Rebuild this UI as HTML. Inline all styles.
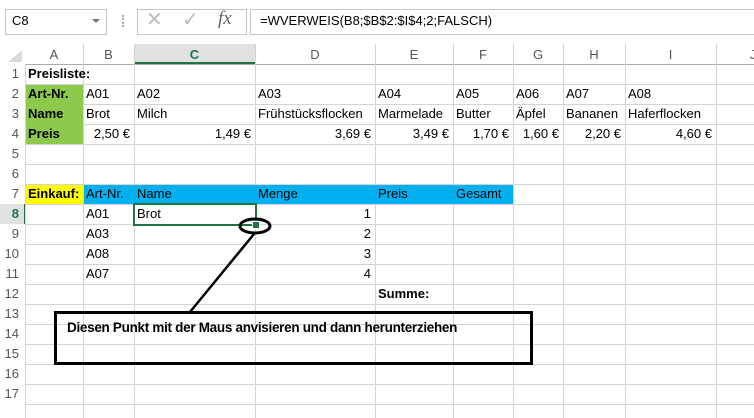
<!DOCTYPE html><html style="overflow:hidden;width:754px;height:418px"><head><style>
html,body{overflow:hidden}
body{margin:0;width:754px;height:418px;overflow:hidden;background:#fff;font-family:"Liberation Sans",sans-serif;font-size:13px;position:relative}
.a{position:absolute}
.t{position:absolute;white-space:nowrap;line-height:20px;color:#000}
.h{position:absolute;color:#555;text-align:center;line-height:19px;font-size:13px}
.vl{position:absolute;width:1px;background:#d4d4d4}
.hl{position:absolute;height:1px;background:#d4d4d4}
</style></head><body>
<div class="a" style="left:5px;top:9px;width:100px;height:24px;border:1px solid #c6c6c6"></div>
<div class="t" style="left:12px;top:11px">C8</div>
<div class="a" style="left:92px;top:19px;border-left:4px solid transparent;border-right:4px solid transparent;border-top:4px solid #777"></div>
<div class="a" style="left:122px;top:15px;width:1px;height:12px;border-left:2px dotted #aaa"></div>
<div class="a" style="left:137px;top:9px;width:108px;height:24px;border:1px solid #c6c6c6"></div>
<div class="t" style="left:146px;top:10px;color:#bbb;font-size:20px">✕</div>
<div class="t" style="left:182px;top:10px;color:#bbb;font-size:20px">✓</div>
<div class="t" style="left:218px;top:9px;color:#666;font-size:19px;font-family:'Liberation Serif',serif;font-style:italic">fx</div>
<div class="a" style="left:250px;top:9px;width:503px;height:24px;border:1px solid #c6c6c6;border-right:none"></div>
<div class="t" style="left:260px;top:11px">=WVERWEIS(B8;$B$2:$I$4;2;FALSCH)</div>
<div class="a" style="left:0;top:44px;width:754px;height:20px;background:#fff;border-bottom:1px solid #ababab"></div>
<div class="a" style="left:134px;top:44px;width:121px;height:18px;background:#e1e1e1;border-bottom:2px solid #217346"></div>
<div class="a" style="left:8px;top:50px;border-left:14px solid transparent;border-bottom:12px solid #dadada"></div>
<div class="a" style="left:0;top:64px;width:25px;height:354px;border-right:1px solid #ababab;background:#fff"></div>
<div class="a" style="left:0;top:204px;width:24px;height:20px;background:#e1e1e1;border-right:2px solid #217346"></div>
<div id="g"></div>
<div class="a" style="left:26px;top:85px;width:57px;height:59px;background:#8cc94d"></div>
<div class="a" style="left:26px;top:185px;width:57px;height:19px;background:#ffff00"></div>
<div class="a" style="left:84px;top:185px;width:429px;height:19px;background:#00b0f0"></div>
<div class="a" style="left:133px;top:203px;width:120px;height:19px;border:2px solid #217346"></div>
<div class="a" style="left:252px;top:221px;width:6px;height:6px;background:#217346;border:1px solid #fff"></div>
<div class="t" style="left:28px;top:64px;font-weight:bold">Preisliste:</div>
<div class="t" style="left:28px;top:84px;font-weight:bold">Art-Nr.</div>
<div class="t" style="left:28px;top:104px;font-weight:bold">Name</div>
<div class="t" style="left:28px;top:124px;font-weight:bold">Preis</div>
<div class="t" style="left:86px;top:84px">A01</div><div class="t" style="left:137px;top:84px">A02</div><div class="t" style="left:258px;top:84px">A03</div><div class="t" style="left:378px;top:84px">A04</div><div class="t" style="left:456px;top:84px">A05</div><div class="t" style="left:516px;top:84px">A06</div><div class="t" style="left:566px;top:84px">A07</div><div class="t" style="left:628px;top:84px">A08</div>
<div class="t" style="left:86px;top:104px">Brot</div><div class="t" style="left:137px;top:104px">Milch</div><div class="t" style="left:258px;top:104px">Frühstücksflocken</div><div class="t" style="left:378px;top:104px">Marmelade</div><div class="t" style="left:456px;top:104px">Butter</div><div class="t" style="left:516px;top:104px">Äpfel</div><div class="t" style="left:566px;top:104px">Bananen</div><div class="t" style="left:628px;top:104px">Haferflocken</div>
<div class="t" style="right:624px;top:124px">2,50 €</div><div class="t" style="right:503px;top:124px">1,49 €</div><div class="t" style="right:383px;top:124px">3,69 €</div><div class="t" style="right:305px;top:124px">3,49 €</div><div class="t" style="right:245px;top:124px">1,70 €</div><div class="t" style="right:195px;top:124px">1,60 €</div><div class="t" style="right:133px;top:124px">2,20 €</div><div class="t" style="right:42px;top:124px">4,60 €</div>
<div class="t" style="left:28px;top:184px;font-weight:bold">Einkauf:</div>
<div class="t" style="left:86px;top:184px">Art-Nr.</div><div class="t" style="left:137px;top:184px">Name</div><div class="t" style="left:258px;top:184px">Menge</div><div class="t" style="left:378px;top:184px">Preis</div><div class="t" style="left:456px;top:184px">Gesamt</div>
<div class="t" style="left:86px;top:204px">A01</div><div class="t" style="left:137px;top:204px">Brot</div><div class="t" style="right:383px;top:204px">1</div>
<div class="t" style="left:86px;top:224px">A03</div><div class="t" style="right:383px;top:224px">2</div>
<div class="t" style="left:86px;top:244px">A08</div><div class="t" style="right:383px;top:244px">3</div>
<div class="t" style="left:86px;top:264px">A07</div><div class="t" style="right:383px;top:264px">4</div>
<div class="t" style="left:378px;top:284px;font-weight:bold">Summe:</div>
<svg class="a" style="left:0;top:0" width="754" height="418">
<ellipse cx="255" cy="226" rx="15" ry="7" fill="none" stroke="#000" stroke-width="3"/>
<line x1="254" y1="234" x2="190" y2="312" stroke="#000" stroke-width="2.5"/>
<rect x="55.5" y="312.5" width="476" height="51" fill="none" stroke="#000" stroke-width="3"/>
</svg>
<div class="t" style="left:67px;top:318px;font-weight:bold;font-size:13.5px;letter-spacing:-0.3px">Diesen Punkt mit der Maus anvisieren und dann herunterziehen</div>
<script>
var g=document.getElementById('g'),s='';
var cols=[25,83,134,255,375,453,513,563,625,716];
var names=['A','B','C','D','E','F','G','H','I','J'];
for(var i=0;i<cols.length;i++){s+='<div class="vl" style="left:'+cols[i]+'px;top:'+(i?44:64)+'px;height:'+(i?374:354)+'px"></div>';
var r=(cols[i+1]||790);s+='<div class="h" style="left:'+cols[i]+'px;top:45px;width:'+(r-cols[i])+'px'+(i==2?';color:#217346;font-weight:bold':'')+'">'+names[i]+'</div>';}
for(var y=84,n=1;y<=418;y+=20,n++){if(y<418)s+='<div class="hl" style="left:25px;top:'+y+'px;width:729px"></div>';
s+='<div class="h" style="left:0;top:'+(y-20)+'px;width:24px;height:20px;overflow:hidden;text-align:right;line-height:20px'+(n==8?';color:#217346;font-weight:bold':'')+'"><span style="margin-right:5px">'+n+'</span></div>';}
g.innerHTML=s;
</script>
</body></html>
